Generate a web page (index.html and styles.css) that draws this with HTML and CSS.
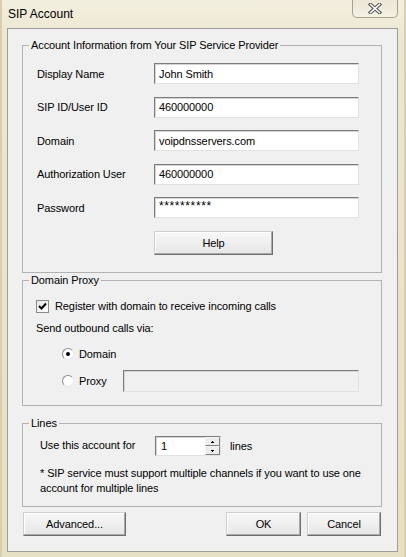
FILE: index.html
```html
<!DOCTYPE html>
<html lang="en">
<head>
    <meta charset="UTF-8">
    <title>SIP Account</title>
    <link rel="stylesheet" href="styles.css">
</head>
<body>
<div class="window">
    <div class="titlebar">
        <span class="title">SIP Account</span>
        <button class="close" aria-label="Close">
            <svg width="14" height="11" viewBox="0 0 14 11">
                <path d="M2.5 1.5 L11.5 9.5 M11.5 1.5 L2.5 9.5" stroke="#4f4f4f" stroke-width="3.6" stroke-linecap="square"/>
                <path d="M2.5 1.5 L11.5 9.5 M11.5 1.5 L2.5 9.5" stroke="#fff" stroke-width="1.6" stroke-linecap="square"/>
            </svg>
        </button>
    </div>

    <div class="client">
        <fieldset class="group">
            <legend>Account Information from Your SIP Service Provider</legend>
            <div class="group-body account">
                <div class="fields">
                    <label for="displayName">Display Name</label>
                    <input class="textbox" id="displayName" type="text" value="John Smith">
                    <label for="sipId">SIP ID/User ID</label>
                    <input class="textbox" id="sipId" type="text" value="460000000">
                    <label for="domain">Domain</label>
                    <input class="textbox" id="domain" type="text" value="voipdnsservers.com">
                    <label for="authUser">Authorization User</label>
                    <input class="textbox" id="authUser" type="text" value="460000000">
                    <label for="password">Password</label>
                    <input class="textbox password" id="password" type="text" value="**********">
                </div>
                <button class="btn help">Help</button>
            </div>
        </fieldset>

        <fieldset class="group">
            <legend>Domain Proxy</legend>
            <div class="group-body proxy">
                <div class="check-row">
                    <span class="checkbox">
                        <svg width="9" height="9" viewBox="0 0 9 9">
                            <path d="M1 4 L3.5 6.5 L8 1.5" fill="none" stroke="#000" stroke-width="2"/>
                        </svg>
                    </span>
                    <span>Register with domain to receive incoming calls</span>
                </div>
                <div class="plain-row">Send outbound calls via:</div>
                <div class="radio-row">
                    <span class="radio checked"></span>
                    <span>Domain</span>
                </div>
                <div class="radio-row proxy-row">
                    <span class="radio-label">
                        <span class="radio"></span>
                        <span>Proxy</span>
                    </span>
                    <input class="textbox disabled" type="text" disabled>
                </div>
            </div>
        </fieldset>

        <fieldset class="group lines">
            <legend>Lines</legend>
            <div class="group-body">
                <div class="spin-row">
                    <span class="spin-label">Use this account for</span>
                    <span class="spinner">
                        <span class="spin-value">1</span>
                        <span class="spin-buttons">
                            <span class="spin-btn">
                                <svg width="3" height="2" viewBox="0 0 3 2"><path d="M1 0 H2 V1 H3 V2 H0 V1 H1 Z" fill="#000"/></svg>
                            </span>
                            <span class="spin-btn">
                                <svg width="3" height="2" viewBox="0 0 3 2"><path d="M0 0 H3 V1 H2 V2 H1 V1 H0 Z" fill="#000"/></svg>
                            </span>
                        </span>
                    </span>
                    <span>lines</span>
                </div>
                <p class="note">* SIP service must support multiple channels if you want to use one account for multiple lines</p>
            </div>
        </fieldset>

        <div class="actions">
            <button class="btn advanced">Advanced...</button>
            <div class="actions-right">
                <button class="btn ok">OK</button>
                <button class="btn cancel">Cancel</button>
            </div>
        </div>
    </div>
</div>
</body>
</html>
```

FILE: styles.css
```css
body {
  margin: 0;
  width: 406px;
  height: 557px;
  overflow: hidden;
  font-family: 'Liberation Sans', Arial, sans-serif;
  font-size: 11px;
  letter-spacing: -0.1px;
  color: #000;
}
.window {
  height: 557px;
  background: linear-gradient(to bottom, #f3efdf 0, #ece7d0 40px, #e6e0c4 100%);
  box-shadow: inset 2px 0 0 #d9cfae, inset -2px 0 0 #d9cfae;
}
.titlebar {
  height: 28px;
  display: flex;
  justify-content: space-between;
  align-items: flex-start;
  padding-left: 8px;
}
.title {
  font-size: 12px;
  letter-spacing: 0;
  line-height: 28px;
}
.close {
  width: 46px;
  height: 18px;
  margin-right: 8px;
  padding: 0;
  border: 1px solid #a8a089;
  border-top: none;
  border-radius: 0 0 5px 5px;
  background: linear-gradient(to bottom, #ece7d5, #f4f1e5);
  display: flex;
  align-items: center;
  justify-content: center;
}
.client {
  box-sizing: border-box;
  height: 524px;
  margin: 0 8px 0 7px;
  padding: 9px 0 0 14px;
  border: 1px solid #9d9d9d;
  background-color: #f0f0f0;
}

/* group boxes */
.group {
  box-sizing: border-box;
  width: 360px;
  margin: 0;
  padding: 0;
  border: 1px solid #b2b2b2;
  min-inline-size: 0;
}
.group legend {
  margin-left: 6px;
  padding: 0 2px;
  line-height: 14px;
}
.group-body {
  padding: 11px 21px 17px 14px;
}
.fields {
  display: grid;
  grid-template-columns: 117px 205px;
  grid-auto-rows: 21px;
  row-gap: 12.5px;
  align-items: center;
}
.textbox {
  box-sizing: border-box;
  height: 21px;
  width: 205px;
  margin: 0;
  padding: 0 4px;
  font-family: inherit;
  font-size: 11px;
  letter-spacing: -0.1px;
  color: #000;
  background: #fff;
  border: 1px solid;
  border-color: #7c7c7c #e2e2e2 #e2e2e2 #7c7c7c;
  box-shadow: inset 1px 1px 0 #d4d4d4;
  outline: none;
}
.textbox.password {
  font-size: 12px;
  letter-spacing: 0.6px;
  padding-bottom: 3px;
}
.textbox.disabled {
  background: #f0f0f0;
}
.btn {
  box-sizing: border-box;
  height: 24px;
  padding: 0;
  font-family: inherit;
  font-size: 11px;
  letter-spacing: -0.1px;
  color: #000;
  border: 1px solid;
  border-color: #cfcfcf #6f6f6f #6f6f6f #cfcfcf;
  box-shadow: inset -1px -1px 0 #a9a9a9, inset 1px 1px 0 #ffffff;
  background: linear-gradient(to bottom, #f7f7f7, #e7e7e7);
}
.help {
  display: block;
  width: 119px;
  margin: 13px 0 0 117px;
}

/* domain proxy */
.proxy {
  padding: 12px 21px 13px 13px;
}
.check-row {
  height: 14px;
  display: flex;
  align-items: center;
  gap: 6px;
}
.checkbox {
  box-sizing: border-box;
  width: 13px;
  height: 13px;
  border: 1px solid #8a8a8a;
  background: linear-gradient(135deg, #e6e6e6, #ffffff);
  display: flex;
  align-items: center;
  justify-content: center;
}
.plain-row {
  height: 14px;
  line-height: 14px;
  margin-top: 8px;
}
.radio-row {
  height: 14px;
  margin-top: 12px;
  padding-left: 26px;
  display: flex;
  align-items: center;
  gap: 5px;
}
.radio {
  box-sizing: border-box;
  width: 12px;
  height: 12px;
  border-radius: 50%;
  border: 1px solid;
  border-color: #8d8d8d #e8e8e8 #e8e8e8 #8d8d8d;
  background: #fff;
  position: relative;
}
.radio.checked::after {
  content: "";
  position: absolute;
  left: 3px;
  top: 3px;
  width: 4px;
  height: 4px;
  border-radius: 50%;
  background: #000;
}
.proxy-row {
  height: 22px;
  margin-top: 9px;
}
.radio-label {
  width: 56px;
  display: flex;
  align-items: center;
  gap: 5px;
}
.proxy-row .textbox {
  height: 22px;
  width: 236px;
}

/* lines */
.lines {
  margin-top: 10px;
}
.lines .group-body {
  padding: 6px 10px 10px 17px;
}
.spin-row {
  height: 20px;
  display: flex;
  align-items: center;
}
.spin-label {
  width: 115px;
  margin-top: -3px;
}
.spinner {
  box-sizing: border-box;
  width: 66px;
  height: 20px;
  margin-right: 9px;
  display: flex;
  justify-content: space-between;
  border: 1px solid;
  border-color: #7c7c7c #e2e2e2 #e2e2e2 #7c7c7c;
  box-shadow: inset 1px 1px 0 #d4d4d4;
  background: #fff;
}
.spin-value {
  padding: 3px 0 0 5px;
}
.spin-buttons {
  width: 15px;
  display: flex;
  flex-direction: column;
}
.spin-btn {
  flex: 1;
  display: flex;
  align-items: center;
  justify-content: center;
  border: 1px solid;
  border-color: #f4f4f4 #808080 #808080 #f4f4f4;
  background: #ececec;
}
.note {
  margin: 10px 0 0;
  line-height: 15px;
}

/* bottom buttons */
.actions {
  width: 358px;
  margin-top: 5px;
  padding-left: 1px;
  display: flex;
  justify-content: space-between;
}
.actions-right {
  display: flex;
  gap: 6px;
}
.advanced {
  width: 103px;
}
.ok {
  width: 75px;
}
.cancel {
  width: 74px;
}
```
